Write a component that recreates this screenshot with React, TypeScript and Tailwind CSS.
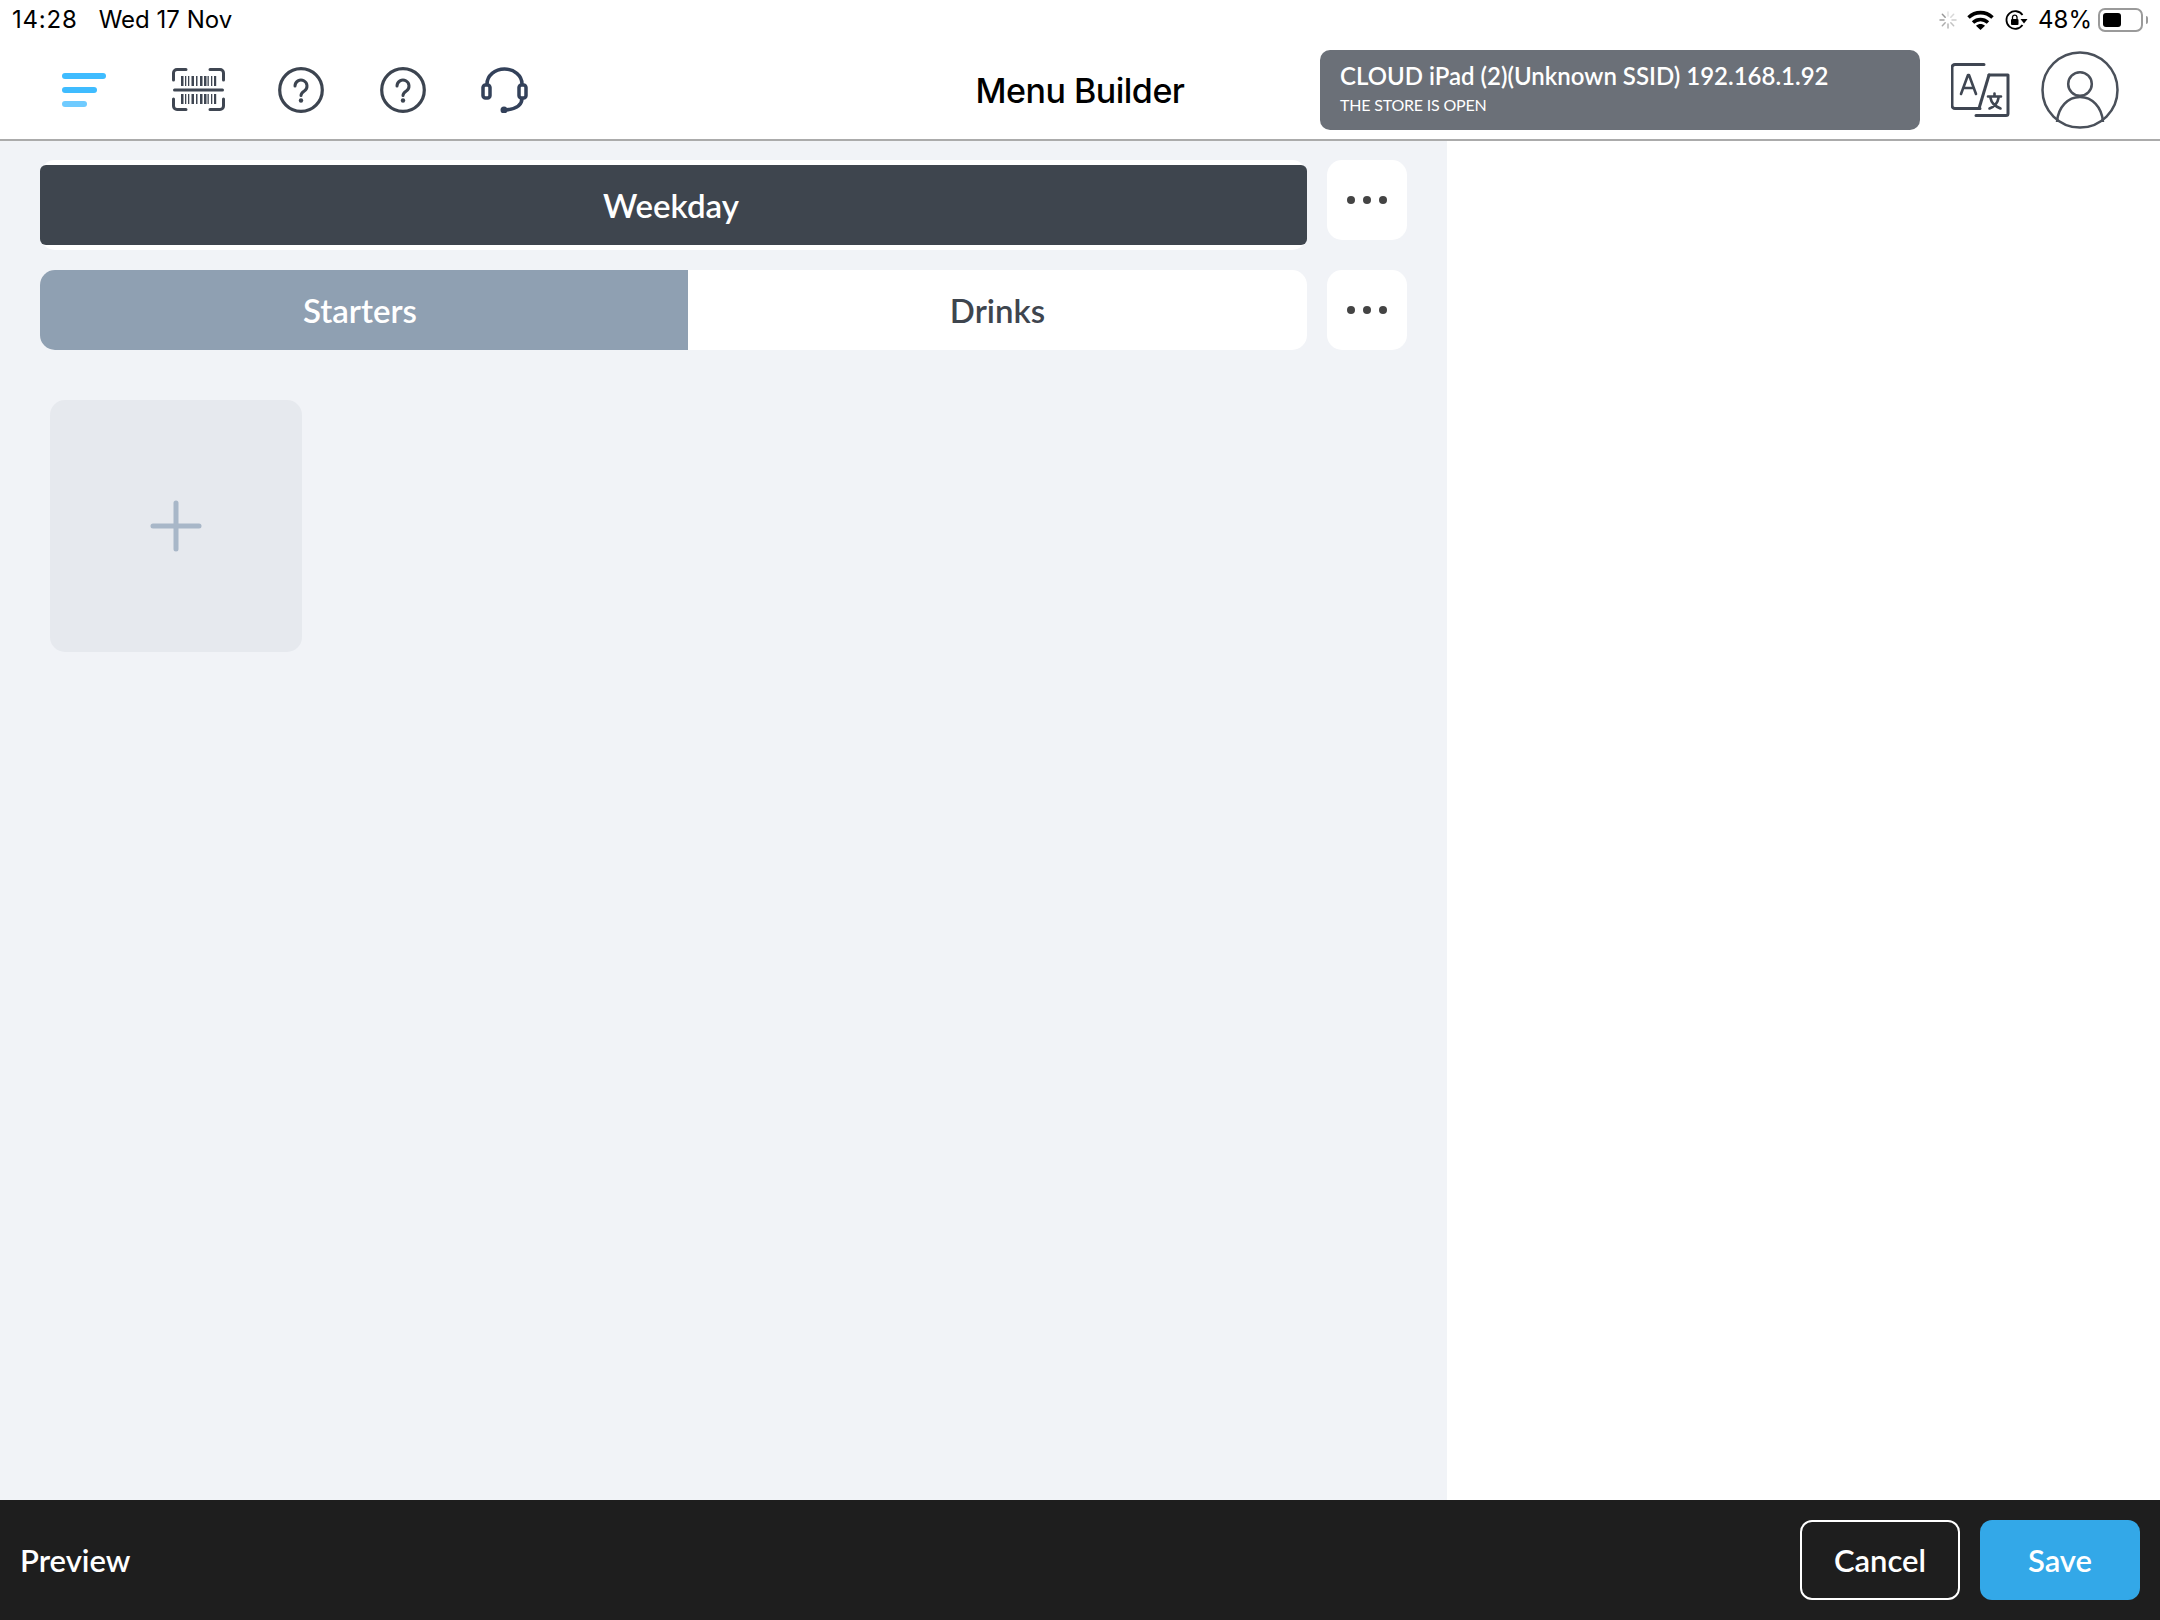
const lato = "font-['Lato','Liberation_Sans',sans-serif]";

const MenuIcon = () => (
  <div className="flex w-[44px] flex-col gap-2">
    <div className="h-[6px] w-[44px] rounded-full bg-[#3fbcff]" />
    <div className="h-[6px] w-[35px] rounded-full bg-[#3fbcff]" />
    <div className="h-[6px] w-[25px] rounded-full bg-[#6fcbff]" />
  </div>
);

const barX = [9, 13, 16, 19.500, 24, 28, 32, 35.500, 39, 42];
const barW = [2.500, 1.300, 1.300, 2.500, 1.500, 2.500, 2.500, 1.300, 1.300, 2.200];

const BarcodeIcon = () => (
  <svg width="53" height="43" viewBox="0 0 53 43" fill="none">
    <g stroke="#3f4652" strokeWidth="3" strokeLinecap="round" strokeLinejoin="round">
      <path d="M1.500 12V5a3.500 3.500 0 0 1 3.500-3.500H14" />
      <path d="M38 1.500h10a3.500 3.500 0 0 1 3.500 3.500v7" />
      <path d="M1.500 31v7a3.500 3.500 0 0 0 3.500 3.500H14" />
      <path d="M38 41.500h10a3.500 3.500 0 0 0 3.500-3.500v-7" />
      <path d="M2.500 22h48" />
    </g>
    {barX.map((x, i) => (
      <g key={x} fill="#3f4652">
        <rect x={x} y="8" width={barW[i]} height="10" />
        <rect x={x} y="26" width={barW[i]} height="10" />
      </g>
    ))}
  </svg>
);

const HelpIcon = () => (
  <svg width="46" height="46" viewBox="0 0 46 46" fill="none">
    <circle cx="23" cy="23" r="21.300" stroke="#3c4450" strokeWidth="3.200" />
    <path
      d="M17 19a6 6 0 1 1 9.300 5c-2 1.300-3.300 2.200-3.300 4.500"
      stroke="#3c4450"
      strokeWidth="3"
      strokeLinecap="round"
    />
    <circle cx="23" cy="33.500" r="2.200" fill="#3c4450" />
  </svg>
);

const HeadsetIcon = () => (
  <svg width="47" height="46" viewBox="0 0 47 46" fill="none" stroke="#33415a" strokeWidth="3.500">
    <path d="M6 18v-1a17.500 15 0 0 1 35 0v1" />
    <rect x="2" y="18" width="7" height="13" rx="2.500" />
    <rect x="38" y="18" width="7" height="13" rx="2.500" />
    <path d="M41 31c0 7-6 11-16 12" />
    <circle cx="23" cy="43" r="3.500" fill="#33415a" stroke="none" />
  </svg>
);

const TranslateIcon = () => (
  <svg width="59" height="54" viewBox="0 0 59 54" fill="none">
    <g stroke="#3f4652" strokeWidth="3" strokeLinecap="round" strokeLinejoin="round">
      <path d="M33 1.500H4a3 3 0 0 0-3 3v38a3 3 0 0 0 3 3h25" />
      <path d="M38 12h19v38.500a2 2 0 0 1-2 2H25" />
      <path d="M38 12 28 45.500" />
      <path d="M10 31 17 12h1l7 19M12.500 25h10" strokeWidth="2.600" />
      <path d="M37 33.500h13M43.500 30.500v3M39.500 35c1 6 5 8.500 10 10.500M47.500 35c-1 6-4 8.500-9 10.500" strokeWidth="2.600" />
    </g>
  </svg>
);

const AvatarIcon = () => (
  <svg width="78" height="78" viewBox="0 0 78 78" fill="none" stroke="#4a505a" strokeWidth="2.500">
    <circle cx="39" cy="39" r="37.500" />
    <circle cx="39" cy="33" r="11.800" />
    <path d="M16 71c1-15 11-25 23-25s22 10 23 25" />
  </svg>
);

const Spinner = () => (
  <svg width="18" height="18" viewBox="0 0 18 18" stroke="#777" strokeWidth="1.500" strokeLinecap="round">
    {[0, 45, 90, 135, 180, 225, 270, 315].map((a, i) => (
      <line key={a} x1="9" y1="1" x2="9" y2="5" transform={`rotate(${a} 9 9)`} opacity={0.2 + i * 0.08} />
    ))}
  </svg>
);

const WifiIcon = () => (
  <svg width="27" height="20" viewBox="0 0 27 20" fill="none" stroke="#000" strokeWidth="3.600">
    <path d="M1.500 7.500c7-6.500 17-6.500 24 0" />
    <path d="M6 12.500c4.500-4 10.500-4 15 0" />
    <path d="M13.500 20 9 15.700c2.500-2.300 6.500-2.300 9 0z" fill="#000" stroke="none" />
  </svg>
);

const RotationLock = () => (
  <svg width="23" height="20" viewBox="0 0 23 20" fill="none">
    <path d="M17.500 15A8.800 8.800 0 1 1 17.500 5" stroke="#000" strokeWidth="1.800" />
    <path d="M15.500 9h7l-3.500 4.500z" fill="#000" />
    <rect x="6" y="9" width="7.500" height="6" rx="1" fill="#000" />
    <path d="M7.500 9V7a2.300 2.300 0 0 1 4.500 0v2" stroke="#000" strokeWidth="1.300" />
  </svg>
);

const Dots = () => (
  <div className="flex h-20 w-20 items-center justify-center gap-2 rounded-[15px] bg-white">
    <div className="h-2 w-2 rounded-full bg-[#444]" />
    <div className="h-2 w-2 rounded-full bg-[#444]" />
    <div className="h-2 w-2 rounded-full bg-[#444]" />
  </div>
);

export default function App() {
  return (
    <div className={`flex h-[1620px] w-[2160px] flex-col overflow-hidden bg-white ${lato}`}>
      {/* STATUS BAR */}
      <div className="flex h-10 items-center pl-3 pr-[12px] font-['Inter',sans-serif] text-[24px] text-black">
        <span className="tracking-[0.8px]">14:28</span>
        <span className="ml-[21px]">Wed 17 Nov</span>
        <div className="ml-auto flex items-center">
          <Spinner />
          <div className="ml-[10px]">
            <WifiIcon />
          </div>
          <div className="ml-[11px]">
            <RotationLock />
          </div>
          <span className="ml-[10px]">48%</span>
          <div className="ml-[6px] flex h-6 w-[45px] items-center rounded-[7px] border-2 border-[#9a9a9a] p-[3px]">
            <div className="h-full w-[18px] rounded-[3px] bg-black" />
          </div>
          <div className="ml-[3px] h-2 w-[2px] rounded-r bg-[#9a9a9a]" />
        </div>
      </div>

      {/* HEADER */}
      <div className="flex h-[101px] items-center border-b-2 border-[#ababab]">
        <div className="flex w-[1320px] items-center">
          <div className="flex w-[840px] items-center pl-[62px]">
            <MenuIcon />
            <div className="ml-[66px]">
              <BarcodeIcon />
            </div>
            <div className="ml-[53px]">
              <HelpIcon />
            </div>
            <div className="ml-[56px]">
              <HelpIcon />
            </div>
            <div className="ml-[55px]">
              <HeadsetIcon />
            </div>
          </div>
          <div className="w-[480px] pt-[2px] text-center font-['Inter',sans-serif] text-[34px] font-medium tracking-[-0.5px] text-black">
            Menu Builder
          </div>
        </div>
        <div className="flex h-20 w-[600px] flex-col justify-center rounded-[10px] bg-[#6b7078] px-5 pb-1 text-white">
          <div className="text-[24px] leading-8 font-semibold">
            CLOUD iPad (2)(Unknown SSID) 192.168.1.92
          </div>
          <div className="mt-[3px] text-[16px] leading-5 tracking-[-0.2px]">THE STORE IS OPEN</div>
        </div>
        <div className="ml-[31px]">
          <TranslateIcon />
        </div>
        <div className="ml-[31px]">
          <AvatarIcon />
        </div>
      </div>

      {/* MAIN */}
      <div className="flex-1">
        <div className="h-full w-[1447px] bg-[#f1f3f7] pt-[19px] pl-10">
          <div className="flex gap-5">
            <div className="flex h-[90px] w-[1267px] items-center rounded-[15px] bg-white">
              <div className="flex h-20 w-full items-center justify-center rounded-[6px] bg-[#3e454e] pt-[2px] pr-[5px] text-[33px] font-semibold text-white">
                Weekday
              </div>
            </div>
            <Dots />
          </div>
          <div className="mt-5 flex gap-5">
            <div className="flex h-20 w-[1267px] overflow-hidden rounded-[15px] bg-white pt-0 text-[33px] font-semibold">
              <div className="flex w-[648px] items-center justify-center bg-[#8fa0b2] pt-[2px] pr-[8px] text-white">Starters</div>
              <div className="flex flex-1 items-center justify-center pt-[2px] text-[#3e454e]">Drinks</div>
            </div>
            <Dots />
          </div>
          <div className="mt-[50px] ml-[10px] flex h-[252px] w-[252px] items-center justify-center rounded-[15px] bg-[#e6e9ee]">
            <svg width="52" height="52" viewBox="0 0 52 52" stroke="#8fa3b8" strokeWidth="5" strokeLinecap="round" opacity="0.7">
              <path d="M26 3v46M3 26h46" />
            </svg>
          </div>
        </div>
      </div>

      {/* FOOTER */}
      <div className="flex h-[120px] items-center bg-[#1e1e1e] px-5 text-[31px] font-semibold text-white">
        <div>Preview</div>
        <button className="ml-auto h-20 w-40 rounded-[12px] border-2 border-white">Cancel</button>
        <button className="ml-5 h-20 w-40 rounded-[12px] bg-[#33a8e8]">Save</button>
      </div>
    </div>
  );
}
